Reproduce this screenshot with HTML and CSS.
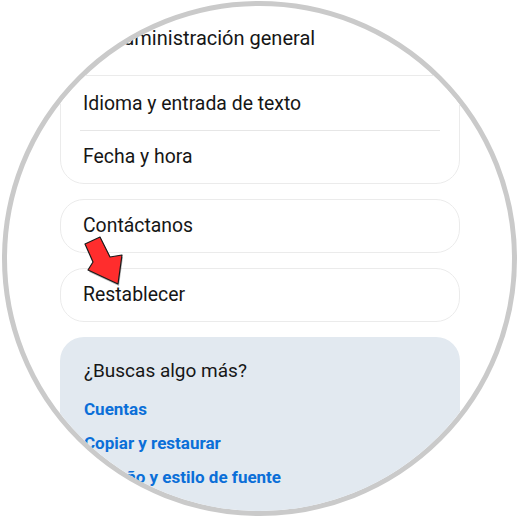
FILE: index.html
```html
<!DOCTYPE html>
<html lang="es">
<head>
    <meta charset="UTF-8">
    <meta name="viewport" content="width=device-width, initial-scale=1.0">
    <title>Administración general</title>
    <link rel="stylesheet" href="styles.css">
</head>
<body>
    <div class="lens">
        <div class="screen">
            <h1 class="title">Administración general</h1>

            <section class="card">
                <div class="row first">Idioma y entrada de texto</div>
                <div class="sep"></div>
                <div class="row">Fecha y hora</div>
            </section>

            <section class="card">
                <div class="row">Contáctanos</div>
            </section>

            <section class="card">
                <div class="row">Restablecer</div>
            </section>

            <section class="more">
                <h2>¿Buscas algo más?</h2>
                <a href="#">Cuentas</a>
                <a href="#">Copiar y restaurar</a>
                <a href="#">Tamaño y estilo de fuente</a>
            </section>
        </div>

        <svg class="arrow" viewBox="80 230 50 60" width="50" height="60">
            <polygon points="86,246 101,239 111,259 123,257 119,286 89,272 94,264" fill="#333" opacity="0.35"/>
            <polygon points="85,244 100,237 110,257 122,255 118,284 88,270 93,262" fill="#ff2d2d" stroke="#1a1a1a" stroke-width="1.2" stroke-linejoin="round"/>
        </svg>
    </div>
</body>
</html>
```

FILE: styles.css
```css
* {
    box-sizing: border-box;
    font-family: 'Roboto', 'Liberation Sans', sans-serif;
}

body {
    margin: 0;
    background: #fff;
}

.lens {
    position: relative;
    width: 515px;
    height: 515px;
    margin: 1px 0 0 2px;
    border: 5px solid #cacaca;
    border-radius: 50%;
    overflow: hidden;
    background: #fff;
}

.screen {
    width: 400px;
    margin-left: 53px;
    display: flex;
    flex-direction: column;
    gap: 15px;
}

.title {
    height: 54px;
    margin: 0;
    padding: 20px 0 0 50px;
    font-size: 20px;
    font-weight: 400;
    line-height: 24px;
    color: #161616;
}

.card {
    border: 1px solid #ebebeb;
    border-radius: 24px;
    background: #fff;
}

.row {
    height: 52px;
    padding-left: 22px;
    font-size: 19.4px;
    line-height: 52px;
    color: #161616;
}

.row.first {
    height: 54px;
    padding-top: 2px;
}

.sep {
    height: 1px;
    margin: 0 19px;
    background: #e6e6e6;
}

.more {
    display: flex;
    flex-direction: column;
    padding: 22px 24px 40px;
    border-radius: 24px;
    background: #e2e9f0;
}

.more h2 {
    margin: 0 0 9px;
    font-size: 19px;
    font-weight: 400;
    line-height: 24px;
    color: #161616;
}

.more a {
    font-size: 17px;
    font-weight: 700;
    line-height: 34px;
    color: #0b6fd8;
    text-decoration: none;
}

.arrow {
    position: absolute;
    left: 73px;
    top: 224px;
}
```
